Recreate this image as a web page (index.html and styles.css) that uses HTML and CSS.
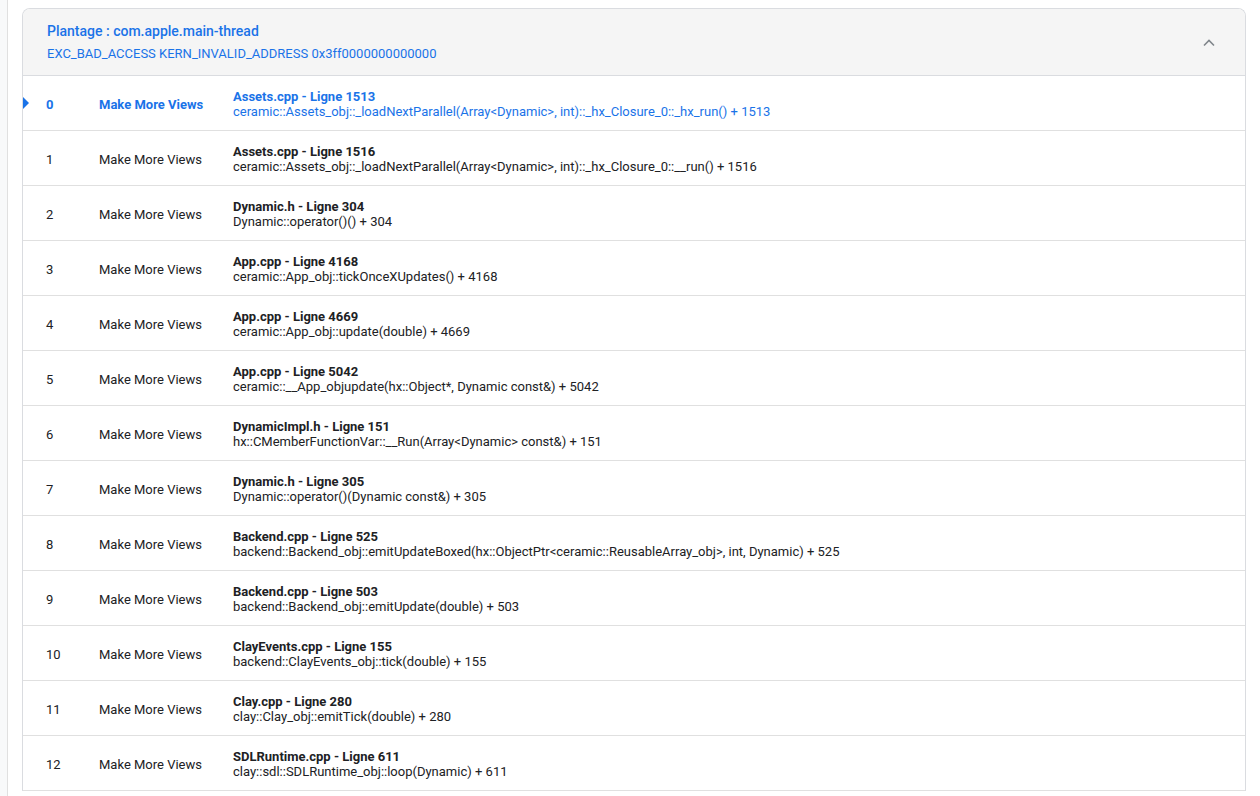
FILE: index.html
```html
<!DOCTYPE html>
<html lang="fr">
<head>
    <meta charset="UTF-8">
    <meta name="viewport" content="width=device-width, initial-scale=1.0">
    <title>Plantage - com.apple.main-thread</title>
    <link rel="stylesheet" href="styles.css">
</head>
<body>
    <div class="gutter"></div>

    <div class="main">
        <div class="crash-card">
            <div class="crash-header">
                <div class="crash-info">
                    <div class="crash-title">Plantage : com.apple.main-thread</div>
                    <div class="crash-reason">EXC_BAD_ACCESS KERN_INVALID_ADDRESS 0x3ff0000000000000</div>
                </div>
                <svg class="collapse-icon" width="14" height="9" viewBox="0 0 14 9" fill="none" stroke="currentColor" stroke-width="1.6">
                    <path d="M2 7.5L7 2.5L12 7.5"/>
                </svg>
            </div>

            <div class="frames" id="frames"></div>
        </div>
    </div>

    <script>
        const frames = [
            { file: "Assets.cpp - Ligne 1513", symbol: "ceramic::Assets_obj::_loadNextParallel(Array<Dynamic>, int)::_hx_Closure_0::_hx_run() + 1513" },
            { file: "Assets.cpp - Ligne 1516", symbol: "ceramic::Assets_obj::_loadNextParallel(Array<Dynamic>, int)::_hx_Closure_0::__run() + 1516" },
            { file: "Dynamic.h - Ligne 304", symbol: "Dynamic::operator()() + 304" },
            { file: "App.cpp - Ligne 4168", symbol: "ceramic::App_obj::tickOnceXUpdates() + 4168" },
            { file: "App.cpp - Ligne 4669", symbol: "ceramic::App_obj::update(double) + 4669" },
            { file: "App.cpp - Ligne 5042", symbol: "ceramic::__App_objupdate(hx::Object*, Dynamic const&) + 5042" },
            { file: "DynamicImpl.h - Ligne 151", symbol: "hx::CMemberFunctionVar::__Run(Array<Dynamic> const&) + 151" },
            { file: "Dynamic.h - Ligne 305", symbol: "Dynamic::operator()(Dynamic const&) + 305" },
            { file: "Backend.cpp - Ligne 525", symbol: "backend::Backend_obj::emitUpdateBoxed(hx::ObjectPtr<ceramic::ReusableArray_obj>, int, Dynamic) + 525" },
            { file: "Backend.cpp - Ligne 503", symbol: "backend::Backend_obj::emitUpdate(double) + 503" },
            { file: "ClayEvents.cpp - Ligne 155", symbol: "backend::ClayEvents_obj::tick(double) + 155" },
            { file: "Clay.cpp - Ligne 280", symbol: "clay::Clay_obj::emitTick(double) + 280" },
            { file: "SDLRuntime.cpp - Ligne 611", symbol: "clay::sdl::SDLRuntime_obj::loop(Dynamic) + 611" }
        ];

        const framesContainer = document.getElementById('frames');

        frames.forEach((frame, index) => {
            const row = document.createElement('div');
            row.className = 'frame-row' + (index === 0 ? ' active' : '');

            const num = document.createElement('div');
            num.className = 'frame-index';
            num.textContent = index;

            const lib = document.createElement('div');
            lib.className = 'frame-lib';
            lib.textContent = 'Make More Views';

            const info = document.createElement('div');
            info.className = 'frame-info';

            const file = document.createElement('div');
            file.className = 'frame-file';
            file.textContent = frame.file;

            const symbol = document.createElement('div');
            symbol.className = 'frame-symbol';
            symbol.textContent = frame.symbol;

            info.appendChild(file);
            info.appendChild(symbol);
            row.appendChild(num);
            row.appendChild(lib);
            row.appendChild(info);
            framesContainer.appendChild(row);
        });
    </script>
</body>
</html>
```

FILE: styles.css
```css
body {
    margin: 0;
    min-height: 100vh;
    background: #fff;
    font-family: Roboto, "Noto Sans", sans-serif;
    color: #202124;
    display: flex;
}

.gutter {
    width: 7px;
    flex-shrink: 0;
    background: #f8f9fa;
    border-right: 1px solid #e0e0e0;
}

.main {
    flex: 1;
    padding: 8px 14px 0 14px;
    min-width: 0;
}

.crash-card {
    border: 1px solid #dadce0;
    border-bottom: none;
    border-radius: 8px 8px 0 0;
    overflow: hidden;
}

.crash-header {
    display: flex;
    align-items: center;
    justify-content: space-between;
    height: 66px;
    padding: 0 29px 0 24px;
    background: #f5f5f5;
    border-bottom: 1px solid #dadce0;
}

.crash-title {
    font-size: 14px;
    font-weight: 500;
    color: #1a73e8;
    line-height: 20px;
    margin-top: -2px;
}

.crash-reason {
    font-size: 13px;
    color: #1a73e8;
    line-height: 16px;
    margin-top: 5px;
}

.collapse-icon {
    color: #80868b;
}

.frame-row {
    position: relative;
    display: grid;
    grid-template-columns: 53px 134px 1fr;
    align-items: center;
    height: 54px;
    padding-left: 23px;
    border-bottom: 1px solid #e0e0e0;
    font-size: 13px;
}

.frame-index,
.frame-lib {
    padding-top: 3px;
}

.frame-info {
    line-height: 15px;
    white-space: nowrap;
    padding-top: 1px;
}

.frame-file {
    font-weight: 700;
}

.frame-row.active {
    color: #1a73e8;
}

.frame-row.active .frame-index,
.frame-row.active .frame-lib {
    font-weight: 700;
}

.frame-row.active::before {
    content: "";
    position: absolute;
    left: -1px;
    top: 50%;
    margin-top: -7px;
    border-left: 7px solid #1a73e8;
    border-top: 7px solid transparent;
    border-bottom: 7px solid transparent;
}
```
